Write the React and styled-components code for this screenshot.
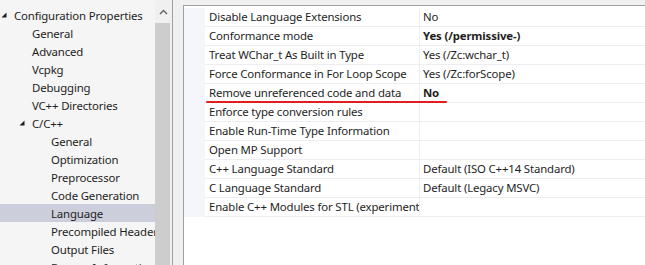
import React from 'react';
import styled, { createGlobalStyle } from 'styled-components';

const Global = createGlobalStyle`
  html, body { margin: 0; padding: 0; background: #f0f0f0; }
  body {
    font-family: "Noto Sans", "Open Sans", sans-serif;
    font-size: 11.4px;
    letter-spacing: -0.15px;
    color: #1e1e1e;
  }
`;

const Frame = styled.div`
  display: flex;
  width: 645px;
  height: 265px;
  overflow: hidden;
  background: #f0f0f0;
`;

const TreePanel = styled.div`
  display: flex;
  flex: none;
  width: 172px;
  border-right: 1px solid #a0a0a0;
  background: #f5f5f5;
`;

const TreeList = styled.ul`
  list-style: none;
  margin: 0;
  padding: 6px 0 0;
  flex: 1;
  min-width: 0;
  overflow: hidden;
`;

const TreeRow = styled.li`
  display: flex;
  align-items: center;
  height: 18px;
  padding-left: ${p => p.$indent}px;
  white-space: nowrap;
  overflow: hidden;
  background: ${p => (p.$selected ? '#cccedb' : 'transparent')};
`;

const Expander = styled.span`
  display: inline-flex;
  align-items: center;
  justify-content: flex-start;
  flex: none;
  width: 13px;
  height: 18px;
`;

const Scrollbar = styled.div`
  display: flex;
  flex-direction: column;
  flex: none;
  width: 17px;
  background: #f0f0f0;
`;

const ArrowButton = styled.div`
  display: flex;
  align-items: center;
  justify-content: center;
  height: 23px;
  flex: none;
`;

const Thumb = styled.div`
  flex: 1;
  margin-right: 2px;
  background: #cdcdcd;
`;

const GridPanel = styled.div`
  flex: 1;
  margin: 5px 0 0 10px;
  border-left: 1px solid #a0a0a0;
  border-top: 1px solid #a0a0a0;
  background: #ffffff;
`;

const Rows = styled.div`
  position: relative;
  padding-top: 2px;
`;

const Row = styled.div`
  display: flex;
  height: 19px;
`;

const Gutter = styled.div`
  flex: none;
  width: 21px;
  background: #f4f6fb;
`;

const NameCell = styled.div`
  flex: none;
  box-sizing: border-box;
  width: 215px;
  padding-left: 4px;
  line-height: 18px;
  border-right: 1px solid #eceef3;
  border-bottom: 1px solid #eceef3;
  white-space: nowrap;
  overflow: hidden;
`;

const ValueCell = styled.div`
  flex: 1;
  box-sizing: border-box;
  padding-left: 3px;
  line-height: 18px;
  border-bottom: 1px solid #eceef3;
  white-space: nowrap;
  overflow: hidden;
  font-weight: ${p => (p.$bold ? 700 : 400)};
`;

const Underline = styled.div`
  position: absolute;
  left: 22px;
  top: 95px;
  width: 241px;
  height: 2px;
  border-radius: 1px;
  background: #e11d1d;
`;

const tree = [
  { label: 'Configuration Properties', indent: 1, open: true },
  { label: 'General', indent: 19 },
  { label: 'Advanced', indent: 19 },
  { label: 'Vcpkg', indent: 19 },
  { label: 'Debugging', indent: 19 },
  { label: 'VC++ Directories', indent: 19 },
  { label: 'C/C++', indent: 19, open: true },
  { label: 'General', indent: 38 },
  { label: 'Optimization', indent: 38 },
  { label: 'Preprocessor', indent: 38 },
  { label: 'Code Generation', indent: 38 },
  { label: 'Language', indent: 38, selected: true },
  { label: 'Precompiled Headers', indent: 38 },
  { label: 'Output Files', indent: 38 },
  { label: 'Browse Information', indent: 38 },
];

const props = [
  ['Disable Language Extensions', 'No'],
  ['Conformance mode', 'Yes (/permissive-)', true],
  ['Treat WChar_t As Built in Type', 'Yes (/Zc:wchar_t)'],
  ['Force Conformance in For Loop Scope', 'Yes (/Zc:forScope)'],
  ['Remove unreferenced code and data', 'No', true],
  ['Enforce type conversion rules', ''],
  ['Enable Run-Time Type Information', ''],
  ['Open MP Support', ''],
  ['C++ Language Standard', 'Default (ISO C++14 Standard)'],
  ['C Language Standard', 'Default (Legacy MSVC)'],
  ['Enable C++ Modules for STL (experimental)', ''],
];

const ExpandedGlyph = () => (
  <svg width="6" height="6" viewBox="0 0 6 6">
    <polygon points="5.5,0.5 5.5,5.5 0.5,5.5" fill="#1e1e1e" />
  </svg>
);

const ChevronUp = () => (
  <svg width="9" height="6" viewBox="0 0 9 6">
    <polyline points="1,5 4.5,1.5 8,5" fill="none" stroke="#606060" strokeWidth="1.4" />
  </svg>
);

export default function App() {
  return (
    <>
      <Global />
      <Frame>
        <TreePanel>
          <TreeList>
            {tree.map((item, i) => (
              <TreeRow key={i} $indent={item.indent} $selected={item.selected}>
                <Expander>{item.open ? <ExpandedGlyph /> : null}</Expander>
                {item.label}
              </TreeRow>
            ))}
          </TreeList>
          <Scrollbar>
            <ArrowButton>
              <ChevronUp />
            </ArrowButton>
            <Thumb />
          </Scrollbar>
        </TreePanel>
        <GridPanel>
          <Rows>
            {props.map(([name, value, bold], i) => (
              <Row key={i}>
                <Gutter />
                <NameCell>{name}</NameCell>
                <ValueCell $bold={bold}>{value}</ValueCell>
              </Row>
            ))}
            <Underline />
          </Rows>
        </GridPanel>
      </Frame>
    </>
  );
}
